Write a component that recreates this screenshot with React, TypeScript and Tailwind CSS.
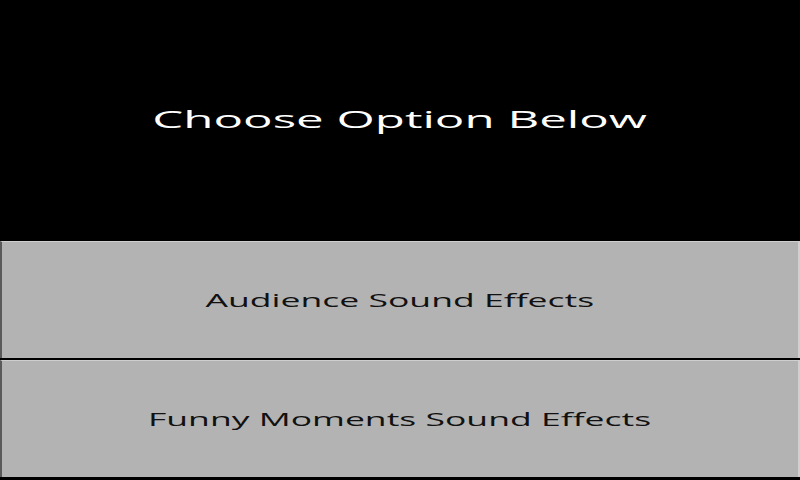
import React from 'react';

const options = ['Audience Sound Effects', 'Funny Moments Sound Effects'];

const OptionButton = ({ label }: { label: string }) => (
  <button className="flex h-[117px] w-full items-center justify-center border-t border-t-[#cfcfcf] border-l-2 border-l-[#5a5a5a] border-r-2 border-r-[#d0d0d0] bg-[#b3b3b3]">
    <span className="inline-block scale-x-[1.87] text-[19px] text-[#111] [font-family:'Open_Sans',sans-serif]">
      {label}
    </span>
  </button>
);

export default function App() {
  return (
    <div className="flex h-[480px] w-[800px] flex-col bg-black">
      <div className="flex h-[241px] items-center justify-center pb-[3px]">
        <span className="inline-block scale-x-[2.05] text-[24px] text-white [font-family:'Open_Sans',sans-serif]">
          Choose Option Below
        </span>
      </div>
      <div className="flex flex-col gap-[2px]">
        {options.map((o) => (
          <OptionButton key={o} label={o} />
        ))}
      </div>
    </div>
  );
}
